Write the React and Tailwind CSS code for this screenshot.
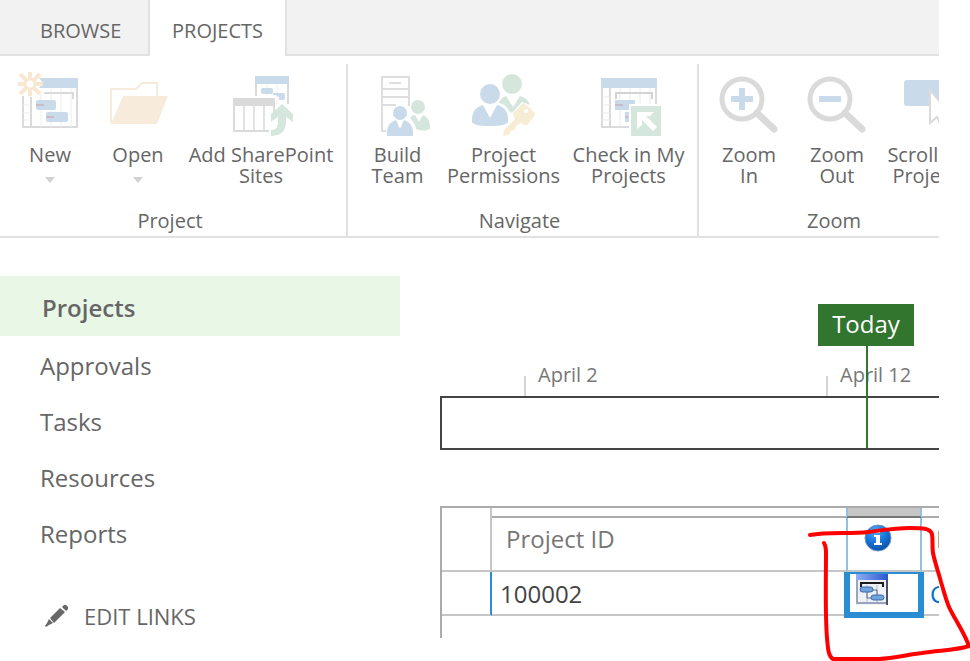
import React from "react";

const BLUE = "#c9daea";
const GREY = "#dadada";
const GREEN = "#d5e7dd";
const SAND = "#f7ebdb";
const GOLD = "#f7edd5";

function Icon({ children }) {
  return (
    <svg viewBox="0 0 64 64" className="block size-16 shrink-0" aria-hidden="true" fill="none">
      {children}
    </svg>
  );
}

function NewIcon() {
  return (
    <Icon>
      <path d="M21 6H60V16H21L25 11Z" fill={BLUE} />
      <path d="M5 24V55H59V16M13 25V55" stroke={GREY} strokeWidth="2" />
      <path d="M23 22V55M33 16V55M43 16V55M53 16V55M5 33H13M5 41H13M5 48H13" stroke="#eeeeee" strokeWidth="1" />
      <path d="M26 21H55V27" stroke={GREY} strokeWidth="2" />
      <rect x="18" y="28" width="20" height="10" rx="2" fill={BLUE} />
      <rect x="28" y="40" width="22" height="10" rx="2" fill={BLUE} />
      <path d="M18 33H26M28 45H36" stroke="#c7bcc8" strokeWidth="2" />
      <circle cx="12" cy="12" r="5" stroke="#f8e8d2" strokeWidth="3" />
      <path d="M12 0V6M12 18V24M0 12H6M18 12H25M2 2L8 8M16 16L22 22M22 2L16 8M2 22L8 16" stroke="#f8e8d2" strokeWidth="4" />
    </Icon>
  );
}

function OpenIcon() {
  return (
    <Icon>
      <path d="M5 51V17H30L36 11H51V24" stroke={SAND} strokeWidth="2" />
      <path d="M17 24H62L51 52H5Z" fill={SAND} />
    </Icon>
  );
}

function AddSitesIcon() {
  return (
    <Icon>
      <rect x="26" y="4" width="34" height="8" fill={BLUE} />
      <path d="M27 12V24M59 12V32" stroke={GREY} strokeWidth="2" />
      <path d="M38 12V24M48 12V32" stroke="#eeeeee" strokeWidth="1" />
      <rect x="32" y="16" width="12" height="6" rx="2" fill={BLUE} />
      <path d="M44 21H54Q56 21 56 23V26Q56 28 54 28H50V25L47 23H44Z" fill={BLUE} />
      <rect x="4" y="26" width="42" height="8" fill={GREY} />
      <path d="M5 34V59H40M45 34V40" stroke={GREY} strokeWidth="2" />
      <path d="M15 34V58M25 34V58M35 34V58" stroke="#e2e2e2" strokeWidth="2" />
      <path d="M53 32L64 42V50L57 45V50C57 59 51 64 42 64V58C47 58 49 55 49 50V45L42 50V42Z" fill={GREEN} />
    </Icon>
  );
}

function BuildTeamIcon() {
  return (
    <Icon>
      <path d="M20 59H16V5H43V34M16 17H43M16 25H43M16 33H30M23 11H35" stroke="#dedede" strokeWidth="2" />
      <circle cx="52" cy="35" r="7" fill={GREEN} />
      <path d="M44 46Q46 43 49 43L53 50L57 43Q64 45 64 57Q57 60 50 57Q49 51 44 46Z" fill={GREEN} />
      <circle cx="34" cy="41" r="7" fill={BLUE} />
      <path d="M21 64Q20 51 30 48L34 57L38 48Q48 51 47 64Z" fill={BLUE} />
    </Icon>
  );
}

function PermissionsIcon() {
  return (
    <Icon>
      <circle cx="40" cy="12" r="10" fill={GREEN} />
      <path d="M27 30Q30 25 34 24L41 35L48 24Q56 26 58 33L50 30L40 41L37 39Q34 32 27 31Z" fill={GREEN} />
      <circle cx="18" cy="22" r="10" fill={BLUE} />
      <path d="M0 50Q-1 36 11 33L18 46L25 33Q37 36 36 50Q34 54 18 54Q2 54 0 50Z" fill={BLUE} />
      <path
        fillRule="evenodd"
        d="M51 31Q53 31 63 41Q64 43 55 53Q53 54 49 51L44 54L43 58L39 59L37 63L31 64L32 58L43 47Q40 43 42 40ZM54 37A2 2 0 1 0 54 41A2 2 0 1 0 54 37Z"
        fill={GOLD}
      />
    </Icon>
  );
}

function CheckInIcon() {
  return (
    <Icon>
      <rect x="4" y="6" width="56" height="10" fill={BLUE} />
      <path d="M5 16V55H32M13 16V55M59 16V32" stroke={GREY} strokeWidth="2" />
      <path d="M23 16V55M33 16V34M43 16V32M53 16V32M5 25H13M5 33H13M5 41H13M5 48H13" stroke="#eaeaea" strokeWidth="1" />
      <path d="M19 27V21H55V27" stroke="#d3d3d3" strokeWidth="2" />
      <path d="M18 28H38V32H32V38H18ZM28 40H32V50H28Z" fill={BLUE} />
      <path d="M18 33H26M28 45H31" stroke="#c7bcc8" strokeWidth="2" />
      <rect x="34" y="34" width="30" height="30" fill={GREEN} />
      <path d="M40 40H57L53 44H49L60 55L56 59L45 48V53L40 57Z" fill="#ffffff" />
    </Icon>
  );
}

function ZoomIcon({ plus }) {
  return (
    <Icon>
      <path d="M40 41L57 57" stroke={GREY} strokeWidth="7" strokeLinecap="round" />
      <circle cx="25" cy="27" r="20" stroke={GREY} strokeWidth="5" />
      <path d={plus ? "M14 27H36M25 16V38" : "M14 27H36"} stroke={BLUE} strokeWidth="6" />
    </Icon>
  );
}

function ScrollIcon() {
  return (
    <Icon>
      <rect x="11" y="8" width="46" height="26" rx="3" fill={BLUE} />
      <path d="M37 18V51L44 45L49 56L54 54L49 43H58Z" fill="#ffffff" stroke={GREY} strokeWidth="2" />
    </Icon>
  );
}

function RibbonButton({ icon, lines, menu, width }) {
  return (
    <button type="button" className={`flex shrink-0 flex-col items-center ${width}`}>
      {icon}
      <span className="mt-2 flex flex-col whitespace-nowrap text-center leading-[21px]">
        {lines.map((line) => (
          <span key={line}>{line}</span>
        ))}
      </span>
      {menu && (
        <svg viewBox="0 0 10 6" className="mt-3 h-[6px] w-[10px]" aria-hidden="true">
          <path d="M0 0H10L5 6Z" fill="#d2d2d2" />
        </svg>
      )}
    </button>
  );
}

function RibbonGroup({ label, children, className }) {
  return (
    <section className={`flex shrink-0 flex-col justify-between border-r-2 border-[#e1e1e1] pt-2 ${className}`}>
      <div className="flex items-start">{children}</div>
      <h2 className="pr-[6px] pb-px text-center leading-7">{label}</h2>
    </section>
  );
}

function InfoIcon() {
  return (
    <svg viewBox="0 0 28 28" className="mx-auto block size-7" role="img" aria-label="Indicators">
      <defs>
        <radialGradient id="info" cx="40%" cy="25%" r="80%">
          <stop offset="0" stopColor="#58a9f5" />
          <stop offset="0.5" stopColor="#1878dc" />
          <stop offset="1" stopColor="#0a4aa5" />
        </radialGradient>
      </defs>
      <circle cx="14" cy="14" r="13" fill="url(#info)" stroke="#7395bd" strokeWidth="1" />
      <path d="M12 6H16V9H12ZM10 11H16V19H18V21H10V19H12V13H10Z" fill="#ffffff" />
    </svg>
  );
}

function ProjectIcon() {
  return (
    <svg viewBox="0 0 32 32" className="block size-8" role="img" aria-label="Project">
      <defs>
        <linearGradient id="bar">
          <stop offset="0" stopColor="#8fb0f2" />
          <stop offset="1" stopColor="#2f55cf" />
        </linearGradient>
      </defs>
      <rect width="32" height="31" fill="#eef1f7" />
      <rect width="32" height="6" fill="url(#bar)" />
      <path d="M1 6V30M0 29H32" stroke="#9aa5bd" strokeWidth="2" />
      <path d="M31 6V31" stroke="#49526a" strokeWidth="2" />
      <path d="M11 11V28M21 11V28" stroke="#b4bac7" strokeWidth="1" />
      <path d="M5 13V9H27V13" stroke="#1c1c1c" strokeWidth="2" fill="none" />
      <rect x="4" y="13" width="13" height="5" rx="2.5" fill="#6ea3dc" stroke="#3a6aa5" />
      <rect x="15" y="21" width="13" height="5" rx="2.5" fill="#6ea3dc" stroke="#3a6aa5" />
      <path d="M11 18V24H15M17 16H21V21" stroke="#5b6b85" strokeWidth="1" fill="none" />
    </svg>
  );
}

function Ribbon() {
  return (
    <header className="overflow-hidden text-[20px]">
      <nav className="flex h-14">
        <a href="#browse" className="flex w-[150px] shrink-0 items-center border-r-2 border-b-2 border-[#e1e1e1] bg-[#f2f2f2] pt-2 pl-10">
          BROWSE
        </a>
        <a href="#projects" aria-current="page" className="flex w-[137px] shrink-0 items-center justify-center border-r-2 border-[#e1e1e1] pt-[6px]">
          PROJECTS
        </a>
        <div className="grow border-b-2 border-[#e1e1e1] bg-[#f2f2f2]" />
      </nav>
      <div className="flex h-[182px] border-b-2 border-[#e1e1e1] pt-2">
        <RibbonGroup label="Project" className="px-[6px]">
          <RibbonButton width="w-[88px]" icon={<NewIcon />} lines={["New"]} menu />
          <RibbonButton width="w-[88px]" icon={<OpenIcon />} lines={["Open"]} menu />
          <RibbonButton width="w-[158px]" icon={<AddSitesIcon />} lines={["Add SharePoint", "Sites"]} />
        </RibbonGroup>
        <RibbonGroup label="Navigate" className="px-[7px]">
          <RibbonButton width="w-[85px]" icon={<BuildTeamIcon />} lines={["Build", "Team"]} />
          <RibbonButton width="w-[127px]" icon={<PermissionsIcon />} lines={["Project", "Permissions"]} />
          <RibbonButton width="w-[123px]" icon={<CheckInIcon />} lines={["Check in My", "Projects"]} />
        </RibbonGroup>
        <RibbonGroup label="Zoom" className="px-[6px]">
          <RibbonButton width="w-[88px]" icon={<ZoomIcon plus />} lines={["Zoom", "In"]} />
          <RibbonButton width="w-[88px]" icon={<ZoomIcon />} lines={["Zoom", "Out"]} />
          <RibbonButton width="w-[88px]" icon={<ScrollIcon />} lines={["Scroll to", "Project"]} />
        </RibbonGroup>
      </div>
    </header>
  );
}

function Sidebar() {
  return (
    <nav className="w-[400px] shrink-0 text-[24px]">
      <a href="#projects" className="mb-[2px] flex h-[60px] items-center bg-[#e8f7e6] pt-1 pl-[42px] font-semibold">
        Projects
      </a>
      {["Approvals", "Tasks", "Resources", "Reports"].map((name) => (
        <a key={name} href={`#${name.toLowerCase()}`} className="flex h-14 items-center pl-10">
          {name}
        </a>
      ))}
      <button type="button" className="mt-[26px] flex h-[56px] items-center gap-4 pl-[44px] text-[22px]">
        <svg viewBox="0 0 24 24" className="size-6" aria-hidden="true" fill="#686868">
          <path d="M18 3L20 1Q22 0 24 3Q25 5 22 7ZM16 4L21 8L10 19L6 14ZM5 15L9 19L5 21L2 23L1 22L3 19Z" />
        </svg>
        EDIT LINKS
      </button>
    </nav>
  );
}

function Timeline() {
  return (
    <section className="relative overflow-hidden pt-[82px] text-[20px] text-[#777777]">
      <div className="flex h-[38px] items-end pl-[84px]">
        <div className="flex w-[302px] shrink-0 items-end">
          <span className="h-5 w-[2px] bg-[#d4d4d4]" />
          <span className="pb-[7px] pl-3 leading-7">April 2</span>
        </div>
        <div className="flex shrink-0 items-end">
          <span className="h-5 w-[2px] bg-[#d4d4d4]" />
          <span className="pb-[7px] pl-3 leading-7">April 12</span>
        </div>
      </div>
      <div className="h-[54px] border-2 border-r-0 border-[#444444]" />
      <div className="absolute top-7 left-[378px] flex w-24 flex-col items-center">
        <span className="flex h-[42px] w-full items-center justify-center bg-[#31752f] pb-[2px] text-[24px] text-white">Today</span>
        <span className="ml-[2px] h-[102px] w-[2px] bg-[#31752f]" />
      </div>
    </section>
  );
}

function ProjectTable() {
  return (
    <section className="relative mt-14">
      <div className="overflow-hidden border-t-2 border-l-2 border-[#ababab]">
        <table className="w-[700px] table-fixed border-separate border-spacing-0 text-left text-[24px]">
          <colgroup>
            <col className="w-[50px]" />
            <col className="w-[354px]" />
            <col className="w-[76px]" />
            <col />
          </colgroup>
          <thead>
            <tr className="h-2">
              <td className="border-r-2 border-[#c6c6c6] p-0" />
              <td className="border-b-2 border-[#ababab] p-0" />
              <td className="h-[10px] border-x-2 border-b-2 border-x-[#92c0e0] border-b-[#777777] bg-[#c6c6c6] p-0" />
              <td className="border-b-2 border-[#ababab] p-0" />
            </tr>
            <tr className="h-[54px] text-[#777777]">
              <td className="border-r-2 border-b-2 border-[#c6c6c6] p-0" />
              <th scope="col" className="border-b-2 border-[#c6c6c6] p-0 pb-[10px] pl-[14px] leading-8 font-normal">
                Project ID
              </th>
              <th scope="col" className="border-x-2 border-b-2 border-x-[#92c0e0] border-b-[#c6c6c6] p-0 pr-3 pb-3 font-normal">
                <InfoIcon />
              </th>
              <th scope="col" className="border-b-2 border-[#c6c6c6] p-0 pb-[10px] pl-[14px] leading-8 font-normal">
                Project Name
              </th>
            </tr>
          </thead>
          <tbody>
            <tr className="h-11 text-[#444444]">
              <td className="border-r-2 border-b-2 border-r-[#2a8dd4] border-b-[#c6c6c6] p-0" />
              <td className="border-b-2 border-[#c6c6c6] p-0 pt-[2px] pl-2 leading-8">100002</td>
              <td className="relative border-b-2 border-[#c6c6c6] p-0">
                <div className="absolute top-0 -right-[2px] -left-[2px] h-[46px] border-x-6 border-t-2 border-b-6 border-[#2a8dd4] bg-white pl-[6px]">
                  <ProjectIcon />
                </div>
              </td>
              <td className="border-b-2 border-[#c6c6c6] p-0 pt-[2px] pl-2 leading-8">
                <a href="#project" className="text-[#0072c6]">
                  C
                </a>
              </td>
            </tr>
          </tbody>
        </table>
        <div className="h-[22px]" />
      </div>
      <svg viewBox="0 0 170 141" className="absolute top-[14px] left-[362px] h-[141px] w-[170px]" aria-hidden="true">
        <path
          d="M8 15C25 12 50 14 66 12C82 10 94 8 108 8C120 8 128 8 130 14C131 20 130 27 131 33C133 43 137 54 139 62C142 72 144 80 147 87C152 98 162 112 167 126C152 131 136 130 120 133C104 135 92 138 77 139H31C26 136 26 128 25 118C23 93 24 63 24 32Q24 26 22 23"
          fill="none"
          stroke="#ff0000"
          strokeWidth="4"
          strokeLinecap="round"
          strokeLinejoin="round"
        />
      </svg>
    </section>
  );
}

export default function App() {
  return (
    <div className="min-h-screen overflow-hidden bg-white pr-[31px] font-['Open_Sans','Noto_Sans',sans-serif] text-[#666666]">
      <Ribbon />
      <div className="mt-[38px] flex gap-10">
        <Sidebar />
        <main className="min-w-0 grow">
          <Timeline />
          <ProjectTable />
        </main>
      </div>
    </div>
  );
}
